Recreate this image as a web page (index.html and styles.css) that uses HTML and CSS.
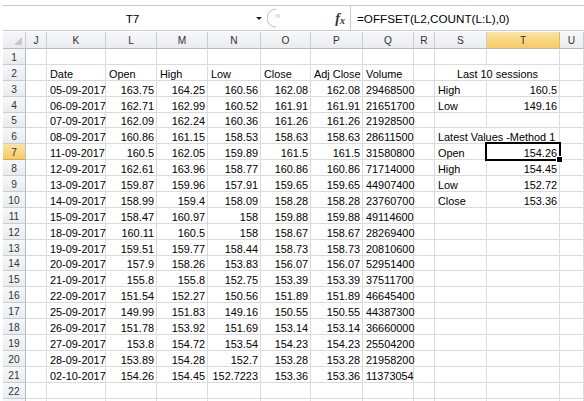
FILE: index.html
```html
<!DOCTYPE html>
<html lang="en">
<head>
    <meta charset="UTF-8">
    <meta name="viewport" content="width=device-width, initial-scale=1.0">
    <title>OFFSET - latest values</title>
    <link rel="stylesheet" href="styles.css">
</head>
<body>
    <div class="formula-bar">
        <div class="name-box">
            <span class="ref">T7</span>
            <span class="arrow"></span>
        </div>
        <div class="bar-mid">
            <svg class="grip" width="18" height="24" viewBox="0 0 18 24">
                <path d="M9 3 A9 9 0 0 0 9 21" fill="none" stroke="#b9bec5" stroke-width="1"/>
                <ellipse cx="11" cy="10" rx="2" ry="1.2" fill="none" stroke="#c8ccd1" stroke-width="1"/>
            </svg>
            <span class="fx"><i>f</i><sub>x</sub></span>
        </div>
        <div class="formula">=OFFSET(L2,COUNT(L:L),0)</div>
    </div>

    <table class="sheet">
        <tr class="cols">
            <th class="corner w-hd"></th>
            <th class="w-j">J</th>
            <th class="w-k">K</th>
            <th class="w-l">L</th>
            <th class="w-m">M</th>
            <th class="w-n">N</th>
            <th class="w-o">O</th>
            <th class="w-p">P</th>
            <th class="w-q">Q</th>
            <th class="w-r">R</th>
            <th class="w-s">S</th>
            <th class="w-t active">T</th>
            <th class="w-u">U</th>
        </tr>
        <tr><th>1</th><td></td><td></td><td></td><td></td><td></td><td></td><td></td><td></td><td></td><td></td><td></td><td></td></tr>
        <tr><th>2</th><td></td><td>Date</td><td>Open</td><td>High</td><td>Low</td><td>Close</td><td>Adj Close</td><td>Volume</td><td></td><td class="c" colspan="2">Last 10 sessions</td><td></td></tr>
        <tr><th>3</th><td></td><td class="n">05-09-2017</td><td class="n">163.75</td><td class="n">164.25</td><td class="n">160.56</td><td class="n">162.08</td><td class="n">162.08</td><td class="n">29468500</td><td></td><td>High</td><td class="n">160.5</td><td></td></tr>
        <tr><th>4</th><td></td><td class="n">06-09-2017</td><td class="n">162.71</td><td class="n">162.99</td><td class="n">160.52</td><td class="n">161.91</td><td class="n">161.91</td><td class="n">21651700</td><td></td><td>Low</td><td class="n">149.16</td><td></td></tr>
        <tr><th>5</th><td></td><td class="n">07-09-2017</td><td class="n">162.09</td><td class="n">162.24</td><td class="n">160.36</td><td class="n">161.26</td><td class="n">161.26</td><td class="n">21928500</td><td></td><td></td><td></td><td></td></tr>
        <tr><th>6</th><td></td><td class="n">08-09-2017</td><td class="n">160.86</td><td class="n">161.15</td><td class="n">158.53</td><td class="n">158.63</td><td class="n">158.63</td><td class="n">28611500</td><td></td><td class="spill">Latest Values -Method 1</td><td></td><td></td></tr>
        <tr><th class="active">7</th><td></td><td class="n">11-09-2017</td><td class="n">160.5</td><td class="n">162.05</td><td class="n">159.89</td><td class="n">161.5</td><td class="n">161.5</td><td class="n">31580800</td><td></td><td>Open</td><td class="n sel">154.26</td><td></td></tr>
        <tr><th>8</th><td></td><td class="n">12-09-2017</td><td class="n">162.61</td><td class="n">163.96</td><td class="n">158.77</td><td class="n">160.86</td><td class="n">160.86</td><td class="n">71714000</td><td></td><td>High</td><td class="n">154.45</td><td></td></tr>
        <tr><th>9</th><td></td><td class="n">13-09-2017</td><td class="n">159.87</td><td class="n">159.96</td><td class="n">157.91</td><td class="n">159.65</td><td class="n">159.65</td><td class="n">44907400</td><td></td><td>Low</td><td class="n">152.72</td><td></td></tr>
        <tr><th>10</th><td></td><td class="n">14-09-2017</td><td class="n">158.99</td><td class="n">159.4</td><td class="n">158.09</td><td class="n">158.28</td><td class="n">158.28</td><td class="n">23760700</td><td></td><td>Close</td><td class="n">153.36</td><td></td></tr>
        <tr><th>11</th><td></td><td class="n">15-09-2017</td><td class="n">158.47</td><td class="n">160.97</td><td class="n">158</td><td class="n">159.88</td><td class="n">159.88</td><td class="n">49114600</td><td></td><td></td><td></td><td></td></tr>
        <tr><th>12</th><td></td><td class="n">18-09-2017</td><td class="n">160.11</td><td class="n">160.5</td><td class="n">158</td><td class="n">158.67</td><td class="n">158.67</td><td class="n">28269400</td><td></td><td></td><td></td><td></td></tr>
        <tr><th>13</th><td></td><td class="n">19-09-2017</td><td class="n">159.51</td><td class="n">159.77</td><td class="n">158.44</td><td class="n">158.73</td><td class="n">158.73</td><td class="n">20810600</td><td></td><td></td><td></td><td></td></tr>
        <tr><th>14</th><td></td><td class="n">20-09-2017</td><td class="n">157.9</td><td class="n">158.26</td><td class="n">153.83</td><td class="n">156.07</td><td class="n">156.07</td><td class="n">52951400</td><td></td><td></td><td></td><td></td></tr>
        <tr><th>15</th><td></td><td class="n">21-09-2017</td><td class="n">155.8</td><td class="n">155.8</td><td class="n">152.75</td><td class="n">153.39</td><td class="n">153.39</td><td class="n">37511700</td><td></td><td></td><td></td><td></td></tr>
        <tr><th>16</th><td></td><td class="n">22-09-2017</td><td class="n">151.54</td><td class="n">152.27</td><td class="n">150.56</td><td class="n">151.89</td><td class="n">151.89</td><td class="n">46645400</td><td></td><td></td><td></td><td></td></tr>
        <tr><th>17</th><td></td><td class="n">25-09-2017</td><td class="n">149.99</td><td class="n">151.83</td><td class="n">149.16</td><td class="n">150.55</td><td class="n">150.55</td><td class="n">44387300</td><td></td><td></td><td></td><td></td></tr>
        <tr><th>18</th><td></td><td class="n">26-09-2017</td><td class="n">151.78</td><td class="n">153.92</td><td class="n">151.69</td><td class="n">153.14</td><td class="n">153.14</td><td class="n">36660000</td><td></td><td></td><td></td><td></td></tr>
        <tr><th>19</th><td></td><td class="n">27-09-2017</td><td class="n">153.8</td><td class="n">154.72</td><td class="n">153.54</td><td class="n">154.23</td><td class="n">154.23</td><td class="n">25504200</td><td></td><td></td><td></td><td></td></tr>
        <tr><th>20</th><td></td><td class="n">28-09-2017</td><td class="n">153.89</td><td class="n">154.28</td><td class="n">152.7</td><td class="n">153.28</td><td class="n">153.28</td><td class="n">21958200</td><td></td><td></td><td></td><td></td></tr>
        <tr><th>21</th><td></td><td class="n">02-10-2017</td><td class="n">154.26</td><td class="n">154.45</td><td class="n">152.7223</td><td class="n">153.36</td><td class="n">153.36</td><td class="n">11373054</td><td></td><td></td><td></td><td></td></tr>
        <tr><th>22</th><td></td><td></td><td></td><td></td><td></td><td></td><td></td><td></td><td></td><td></td><td></td><td></td></tr>
        <tr><th></th><td></td><td></td><td></td><td></td><td></td><td></td><td></td><td></td><td></td><td></td><td></td><td></td></tr>
    </table>
</body>
</html>
```

FILE: styles.css
```css
body {
    margin: 0;
    padding: 0 0 0 3px;
    background: #fff;
    color: #000;
    font-family: "Liberation Sans", Arial, sans-serif;
    overflow: hidden;
}

/* formula bar */
.formula-bar {
    display: flex;
    height: 24px;
    margin-top: 5px;
    border-top: 1px solid #c6cbd1;
    border-bottom: 1px solid #c6cbd1;
}
.name-box {
    width: 262px;
    display: flex;
    align-items: center;
}
.name-box .ref {
    flex: 1;
    text-align: center;
    font-size: 11.7px;
    padding-left: 6px;
}
.name-box .arrow {
    width: 0;
    height: 0;
    border-left: 3px solid transparent;
    border-right: 3px solid transparent;
    border-top: 3px solid #222;
    margin-right: 3px;
}
.bar-mid {
    width: 85px;
    display: flex;
    align-items: center;
}
.grip {
    margin-left: 2px;
}
.fx {
    margin-left: auto;
    margin-right: 5px;
    font-family: "Liberation Serif", serif;
    font-weight: bold;
    color: #333;
    line-height: 1;
}
.fx i {
    font-size: 14px;
}
.fx sub {
    font-size: 10px;
    font-style: italic;
    vertical-align: -1px;
}
.formula {
    flex: 1;
    border-left: 1px solid #c6cbd1;
    padding-left: 6px;
    font-size: 11.7px;
    line-height: 25px;
}

/* grid */
.sheet {
    margin-top: 1px;
    border-collapse: separate;
    border-spacing: 0;
    table-layout: fixed;
    width: 581px;
}
.sheet th,
.sheet td {
    box-sizing: border-box;
    padding: 0;
    white-space: nowrap;
    overflow: visible;
}
.sheet tr {
    height: 15.9px;
}
.sheet tr.cols {
    height: 17px;
}
.sheet th {
    background: linear-gradient(#f6f7f9, #e9ecef);
    border-right: 1px solid #c9cdd2;
    border-bottom: 1px solid #c9cdd2;
    color: #333;
    font-weight: normal;
    font-size: 10.2px;
    text-align: center;
    vertical-align: bottom;
    line-height: 12px;
}
.sheet tr.cols th {
    vertical-align: middle;
    border-bottom-color: #b6bbc2;
    padding-top: 1px;
}
.sheet tr:not(.cols) th {
    border-right-color: #b6bbc2;
}
.sheet th.active {
    background: linear-gradient(#fbe4a2, #f6cb62);
    border-right-color: #e5b65c;
    border-bottom-color: #e5a43f;
    color: #333;
}
.corner {
    position: relative;
}
.corner::after {
    content: "";
    position: absolute;
    right: 3px;
    bottom: 3px;
    border-left: 8px solid transparent;
    border-bottom: 8px solid #c3c8ce;
}

.w-hd { width: 23px; }
.w-j { width: 21px; }
.w-k { width: 59px; }
.w-l { width: 51px; }
.w-m { width: 51px; }
.w-n { width: 53px; }
.w-o { width: 50px; }
.w-p { width: 52px; }
.w-q { width: 51px; }
.w-r { width: 21px; }
.w-s { width: 52px; }
.w-t { width: 73px; }
.w-u { width: 24px; }

.sheet td {
    border-right: 1px solid #d9dbdc;
    border-bottom: 1px solid #d9dbdc;
    font-size: 10.9px;
    line-height: 11px;
    vertical-align: bottom;
    padding: 0 2px 0 3px;
    text-align: left;
}
.sheet td.n {
    text-align: right;
}
.sheet td.c {
    text-align: center;
}
.sheet td.spill {
    border-right-color: transparent;
}

/* active cell */
.sheet td.sel {
    position: relative;
}
.sheet td.sel::before {
    content: "";
    position: absolute;
    left: -2px;
    top: -2px;
    right: -2px;
    bottom: -2px;
    border: 2px solid #000;
}
.sheet td.sel::after {
    content: "";
    position: absolute;
    right: -4px;
    bottom: -4px;
    width: 5px;
    height: 5px;
    background: #000;
    border: 1px solid #fff;
}
```
